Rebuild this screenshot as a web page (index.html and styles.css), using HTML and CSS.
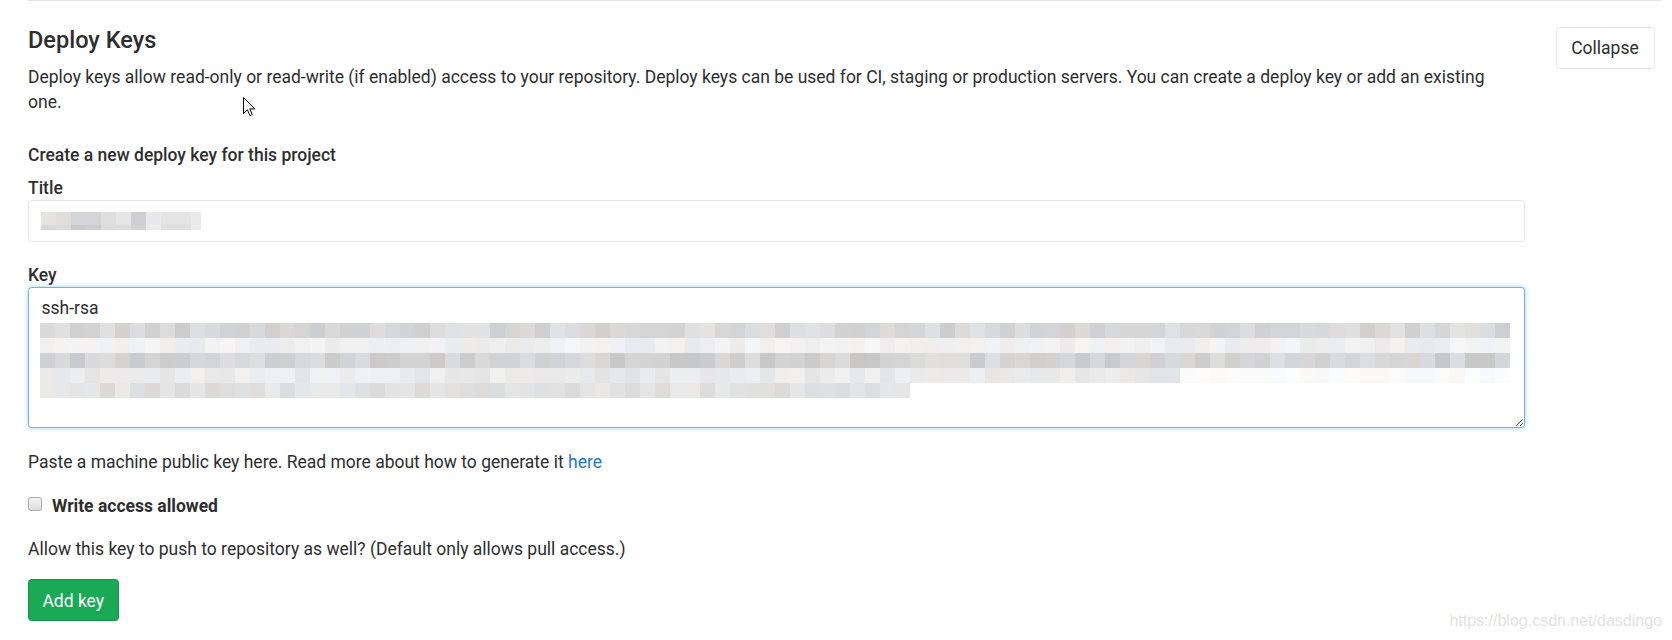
FILE: index.html
```html
<!DOCTYPE html>
<html lang="en">
<head>
    <meta charset="UTF-8">
    <meta name="viewport" content="width=device-width, initial-scale=1.0">
    <title>Deploy Keys</title>
    <link rel="stylesheet" href="styles.css">
</head>
<body>
    <section class="settings-section">
        <div class="settings-header">
            <div class="settings-intro">
                <h4 class="settings-title">Deploy Keys</h4>
                <p class="settings-desc">Deploy keys allow read-only or read-write (if enabled) access to your repository. Deploy keys can be used for CI, staging or production servers. You can create a deploy key or add an existing one.</p>
            </div>
            <button type="button" class="btn btn-default">Collapse</button>
        </div>

        <form class="deploy-key-form">
            <h5 class="form-heading">Create a new deploy key for this project</h5>
            <div class="form-group">
                <label for="deploy-key-title">Title</label>
                <div class="field-wrap">
                    <input id="deploy-key-title" class="form-control" type="text">
                    <!-- redacted value -->
                    <canvas class="redacted title-blur" id="title-blur" width="160" height="19"></canvas>
                </div>
            </div>
            <div class="form-group">
                <label for="deploy-key-key">Key</label>
                <div class="field-wrap">
                    <textarea id="deploy-key-key" class="form-control key-input is-focused">ssh-rsa</textarea>
                    <canvas class="redacted key-blur" id="key-blur" width="1470" height="75"></canvas>
                </div>
            </div>
            <p class="help-text">Paste a machine public key here. Read more about how to generate it <a href="#">here</a></p>
            <label class="checkbox-row">
                <input type="checkbox" class="checkbox">
                <strong>Write access allowed</strong>
            </label>
            <p class="help-text allow-text">Allow this key to push to repository as well? (Default only allows pull access.)</p>
            <button type="button" class="btn btn-success">Add key</button>
        </form>
    </section>

    <svg class="mouse-cursor" width="13" height="20" viewBox="0 0 13 20">
        <path d="M0.5 0.5 L0.5 16.5 L4.4 12.8 L7 18.6 L9.3 17.6 L6.8 11.9 L11.8 11.9 Z" fill="#fff" stroke="#000" stroke-width="1" stroke-linejoin="round"/>
    </svg>

    <div class="watermark">https://blog.csdn.net/dasdingo</div>

    <script>
        // Small seeded random so the redaction mosaic is the same every time
        function seeded(seed) {
            return function() {
                seed = (seed + 0x6D2B79F5) | 0;
                var t = Math.imul(seed ^ (seed >>> 15), 1 | seed);
                t = (t + Math.imul(t ^ (t >>> 7), 61 | t)) ^ t;
                return ((t ^ (t >>> 14)) >>> 0) / 4294967296;
            };
        }

        function grey(rnd, base, spread) {
            var g = Math.round(base + (rnd() - 0.5) * spread * 2);
            var tint = Math.round((rnd() - 0.5) * 5);
            return 'rgb(' + (g + tint) + ',' + g + ',' + (g - tint + 1) + ')';
        }

        // Key field: five rows of 15px blocks
        var kc = document.getElementById('key-blur').getContext('2d');
        var rnd = seeded(42);
        var rows = [
            { base: 216, spread: 11, cols: 98 },
            { base: 240, spread: 6, cols: 98 },
            { base: 211, spread: 12, cols: 98 },
            { base: 234, spread: 7, cols: 76, tail: 251 },
            { base: 226, spread: 8, cols: 58 }
        ];
        rows.forEach(function(row, r) {
            for (var c = 0; c < 98; c++) {
                if (c < row.cols) {
                    kc.fillStyle = grey(rnd, row.base, row.spread);
                } else if (row.tail) {
                    kc.fillStyle = grey(rnd, row.tail, 3);
                } else {
                    continue;
                }
                kc.fillRect(c * 15, r * 15, 15, 15);
            }
        });

        // Title field
        var titleColours = [
            ['#e4e3e0', '#dfdedb', '#d2d4d7', '#d4d4d7', '#dedede', '#e6e6e6', '#cfcfd1', '#e8e8ea', '#e4e4e4', '#e4e4e4', '#e9e9e9'],
            ['#d8d8d8', '#dadada', '#c9c9cd', '#cdcdd1', '#dcdcdc', '#dcdcdc', '#d2d2d4', '#ececee', '#dedede', '#dedede', '#ececec']
        ];
        var tc = document.getElementById('title-blur').getContext('2d');
        titleColours.forEach(function(list, r) {
            list.forEach(function(colour, c) {
                tc.fillStyle = colour;
                tc.fillRect(c * 15, r === 0 ? 0 : 13, 15, r === 0 ? 13 : 5);
            });
        });
    </script>
</body>
</html>
```

FILE: styles.css
```css
* {
    box-sizing: border-box;
}
body {
    margin: 0;
    height: 640px;
    overflow: hidden;
    position: relative;
    background: #fff;
    color: #2e2e2e;
    font-family: Roboto, "Segoe UI", sans-serif;
    font-size: 17.5px;
    line-height: 25px;
}
.settings-section {
    margin: 0 10px 0 28px;
    border-top: 1px solid #e5e5e5;
    padding-top: 24px;
}
.settings-header {
    display: flex;
    align-items: flex-start;
    gap: 48px;
    padding-right: 7.5px;
}
.settings-intro {
    flex: 1;
    min-width: 0;
}
.settings-title {
    margin: 0 0 10px;
    font-size: 23.5px;
    line-height: 30px;
    font-weight: 500;
}
.settings-desc {
    margin: 0;
}
.btn {
    font: inherit;
    line-height: 25px;
    padding: 8.5px 0 6.5px;
    border-radius: 3.75px;
    text-align: center;
    cursor: pointer;
}
.btn-default {
    width: 99px;
    margin-top: 1.5px;
    background: #fff;
    border: 1px solid #e5e5e5;
    color: #2e2e2e;
}
.btn-success {
    width: 90.5px;
    margin-top: 17px;
    background: #1aaa55;
    border: 1px solid #168f48;
    color: #fff;
}
.deploy-key-form {
    padding-right: 137.5px;
}
.form-heading {
    margin: 28px 0 9px;
    font-size: 17.5px;
    line-height: 25px;
    font-weight: 500;
}
.form-group {
    margin-bottom: 22px;
}
.form-group label {
    display: block;
    margin-bottom: 1px;
    line-height: 22px;
    font-weight: 500;
}
.field-wrap {
    position: relative;
}
.form-control {
    display: block;
    width: 100%;
    height: 42px;
    padding: 7.5px 12.5px;
    border: 1px solid #e5e5e5;
    border-radius: 3.75px;
    background: #fff;
    color: #2e2e2e;
    font: inherit;
    line-height: 25px;
    outline: none;
}
.key-input {
    height: 141px;
}
.key-input.is-focused {
    border-color: #73afea;
    box-shadow: 0 0 5px rgba(115, 175, 234, 0.6);
}
/* pixelated redaction laid over the field values */
.redacted {
    position: absolute;
    pointer-events: none;
}
.title-blur {
    left: 12.5px;
    top: 11.5px;
}
.key-blur {
    left: 12px;
    top: 36px;
}
.help-text {
    margin: 0;
}
.help-text a {
    color: #1f78d1;
    text-decoration: none;
}
.checkbox-row {
    display: flex;
    align-items: flex-start;
    margin-top: 19px;
}
.checkbox-row strong {
    font-weight: 700;
}
.checkbox {
    appearance: none;
    -webkit-appearance: none;
    width: 14px;
    height: 14px;
    margin: 3px 10px 0 0;
    border: 1px solid #a9a9a9;
    border-radius: 3px;
    background: linear-gradient(#f4f4f4, #dedede);
}
.allow-text {
    margin-top: 18px;
}
.mouse-cursor {
    position: absolute;
    left: 243px;
    top: 97px;
}
.watermark {
    position: absolute;
    right: 10px;
    top: 612px;
    font-family: "Liberation Sans", Arial, sans-serif;
    font-size: 16px;
    line-height: 18px;
    color: #e2e2e2;
}
```
